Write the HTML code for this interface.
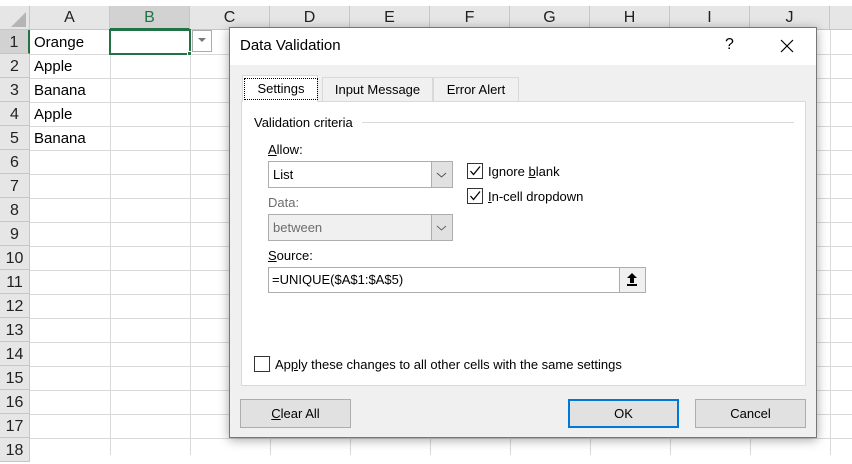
<!DOCTYPE html><html><head><style>
*{box-sizing:border-box;margin:0;padding:0}
body{width:852px;height:455px;overflow:hidden;background:#fff;font-family:"Liberation Sans",sans-serif;position:relative}
.a{position:absolute}
.ch{position:absolute;top:6px;height:24px;background:#e6e6e6;border-right:1px solid #c6c6c6;border-bottom:1px solid #c6c6c6;font-size:16px;color:#222;text-align:center;line-height:24px}
.rh{position:absolute;left:0;width:30px;height:24px;background:#e6e6e6;border-bottom:1px solid #c6c6c6;border-right:1px solid #c6c6c6;font-size:16px;color:#222;text-align:center;line-height:26px}
.vl{position:absolute;top:30px;bottom:0;width:1px;background:#d9d9d9}
.hl{position:absolute;left:30px;right:0;height:1px;background:#d9d9d9}
.cell{position:absolute;left:34px;font-size:15px;color:#000;line-height:26px}
.dlg{position:absolute;left:229px;top:27px;width:588px;height:411px;background:#f0f0f0;border:1px solid #777;box-shadow:0 2px 10px rgba(0,0,0,.35);font-size:13px;color:#000}
.btn{position:absolute;top:371px;height:29px;width:111px;background:#e1e1e1;border:1px solid #adadad;text-align:center;line-height:27px;font-size:13px}
.cb{position:absolute;width:16px;height:16px;border:1px solid #333;background:#fff}
u{text-decoration:underline}
</style></head><body>
<div class="a" style="left:0;top:6px;width:30px;height:24px;background:#e6e6e6;border-right:1px solid #c6c6c6;border-bottom:1px solid #c6c6c6"></div>
<svg class="a" style="left:10px;top:12px" width="17" height="16"><polygon points="16,0 16,15 1,15" fill="#b5b5b5"/></svg>
<div class="ch" style="left:30px;width:80px">A</div>
<div class="ch" style="left:110px;width:80px;background:#d2d2d2;color:#217346;border-bottom:2px solid #217346">B</div>
<div class="ch" style="left:190px;width:80px">C</div>
<div class="ch" style="left:270px;width:80px">D</div>
<div class="ch" style="left:350px;width:80px">E</div>
<div class="ch" style="left:430px;width:80px">F</div>
<div class="ch" style="left:510px;width:80px">G</div>
<div class="ch" style="left:590px;width:80px">H</div>
<div class="ch" style="left:670px;width:80px">I</div>
<div class="ch" style="left:750px;width:80px">J</div>
<div class="ch" style="left:830px;width:30px"></div>
<div class="vl" style="left:110px"></div><div class="vl" style="left:190px"></div><div class="vl" style="left:270px"></div><div class="vl" style="left:350px"></div><div class="vl" style="left:430px"></div><div class="vl" style="left:510px"></div><div class="vl" style="left:590px"></div><div class="vl" style="left:670px"></div><div class="vl" style="left:750px"></div><div class="vl" style="left:830px"></div>
<div class="hl" style="top:54px"></div><div class="hl" style="top:78px"></div><div class="hl" style="top:102px"></div><div class="hl" style="top:126px"></div><div class="hl" style="top:150px"></div><div class="hl" style="top:174px"></div><div class="hl" style="top:198px"></div><div class="hl" style="top:222px"></div><div class="hl" style="top:246px"></div><div class="hl" style="top:270px"></div><div class="hl" style="top:294px"></div><div class="hl" style="top:318px"></div><div class="hl" style="top:342px"></div><div class="hl" style="top:366px"></div><div class="hl" style="top:390px"></div><div class="hl" style="top:414px"></div><div class="hl" style="top:438px"></div>
<div class="rh" style="top:30px;background:#d2d2d2;border-right:2px solid #217346">1</div>
<div class="rh" style="top:54px">2</div><div class="rh" style="top:78px">3</div><div class="rh" style="top:102px">4</div><div class="rh" style="top:126px">5</div><div class="rh" style="top:150px">6</div><div class="rh" style="top:174px">7</div><div class="rh" style="top:198px">8</div><div class="rh" style="top:222px">9</div><div class="rh" style="top:246px">10</div><div class="rh" style="top:270px">11</div><div class="rh" style="top:294px">12</div><div class="rh" style="top:318px">13</div><div class="rh" style="top:342px">14</div><div class="rh" style="top:366px">15</div><div class="rh" style="top:390px">16</div><div class="rh" style="top:414px">17</div><div class="rh" style="top:438px">18</div>
<div class="cell" style="top:30px">Orange</div><div class="cell" style="top:54px">Apple</div><div class="cell" style="top:78px">Banana</div><div class="cell" style="top:102px">Apple</div><div class="cell" style="top:126px">Banana</div>
<div class="a" style="left:109px;top:29px;width:82px;height:26px;border:2px solid #217346"></div>
<div class="a" style="left:187px;top:51px;width:5px;height:5px;background:#217346;border:1px solid #fff"></div>
<div class="a" style="left:192px;top:30px;width:20px;height:22px;border:1px solid #ababab;background:#fff"></div>
<svg class="a" style="left:198px;top:38px" width="9" height="5"><polygon points="0,0 8,0 4,4" fill="#777"/></svg>

<div class="dlg">
<div class="a" style="left:0;top:0;width:586px;height:37px;background:#fff"></div>
<div class="a" style="left:10px;top:9px;font-size:15px">Data Validation</div>
<div class="a" style="left:495px;top:8px;font-size:16px">?</div>
<svg class="a" style="left:550px;top:11px" width="14" height="14"><path d="M1 1L13 13M13 1L1 13" stroke="#000" stroke-width="1.2"/></svg>
<div class="a" style="left:11px;top:73px;width:565px;height:285px;background:#fff;border:1px solid #d9d9d9"></div>
<div class="a" style="left:12px;top:47px;width:76px;height:27px;background:#fff;border:1px solid #d9d9d9;border-bottom:none"></div>
<div class="a" style="left:14px;top:50px;width:74px;height:22px;border:1px dotted #000;text-align:center;line-height:20px">Settings</div>
<div class="a" style="left:92px;top:49px;width:111px;height:25px;background:#f0f0f0;border:1px solid #d9d9d9;text-align:center;line-height:24px">Input Message</div>
<div class="a" style="left:203px;top:49px;width:86px;height:25px;background:#f0f0f0;border:1px solid #d9d9d9;text-align:center;line-height:24px">Error Alert</div>
<div class="a" style="left:24px;top:87px">Validation criteria</div>
<div class="a" style="left:132px;top:94px;width:432px;height:1px;background:#d9d9d9"></div>
<div class="a" style="left:38px;top:114px"><u>A</u>llow:</div>
<div class="a" style="left:38px;top:133px;width:185px;height:27px;border:1px solid #adadad;background:#fff;padding-left:4px;line-height:25px">List</div>
<div class="a" style="left:201px;top:134px;width:21px;height:25px;background:#e1e1e1;border-left:1px solid #adadad"></div>
<svg class="a" style="left:206px;top:144px" width="11" height="6"><path d="M1 1L5.5 5L10 1" fill="none" stroke="#555"/></svg>
<div class="a" style="left:38px;top:167px;color:#6d6d6d">Data:</div>
<div class="a" style="left:38px;top:186px;width:185px;height:27px;border:1px solid #adadad;background:#f0f0f0;color:#6d6d6d;padding-left:4px;line-height:25px">between</div>
<div class="a" style="left:201px;top:187px;width:21px;height:25px;background:#e1e1e1;border-left:1px solid #adadad"></div>
<svg class="a" style="left:206px;top:197px" width="11" height="6"><path d="M1 1L5.5 5L10 1" fill="none" stroke="#666"/></svg>
<div class="a" style="left:38px;top:220px"><u>S</u>ource:</div>
<div class="a" style="left:38px;top:239px;width:378px;height:26px;border:1px solid #adadad;background:#fff;padding-left:3px;line-height:24px">=UNIQUE($A$1:$A$5)</div>
<div class="a" style="left:389px;top:240px;width:26px;height:24px;background:#f0f0f0;border-left:1px solid #adadad"></div>
<svg class="a" style="left:396px;top:244px" width="12" height="15"><path d="M6 1L1 6H4V11H8V6H11Z" fill="#000"/><rect x="1" y="12" width="10" height="2" fill="#000"/></svg>
<div class="cb" style="left:237px;top:135px"></div>
<svg class="a" style="left:239px;top:137px" width="12" height="12"><path d="M1.5 6L4.5 9.5L11 1.5" fill="none" stroke="#000" stroke-width="1.3"/></svg>
<div class="a" style="left:258px;top:136px">Ignore <u>b</u>lank</div>
<div class="cb" style="left:237px;top:160px"></div>
<svg class="a" style="left:239px;top:162px" width="12" height="12"><path d="M1.5 6L4.5 9.5L11 1.5" fill="none" stroke="#000" stroke-width="1.3"/></svg>
<div class="a" style="left:258px;top:161px"><u>I</u>n-cell dropdown</div>
<div class="cb" style="left:24px;top:328px"></div>
<div class="a" style="left:45px;top:329px">Ap<u>p</u>ly these changes to all other cells with the same settings</div>
<div class="btn" style="left:10px"><u>C</u>lear All</div>
<div class="btn" style="left:338px;border:2px solid #0078d7;line-height:25px">OK</div>
<div class="btn" style="left:465px">Cancel</div>
</div>
</body></html>
